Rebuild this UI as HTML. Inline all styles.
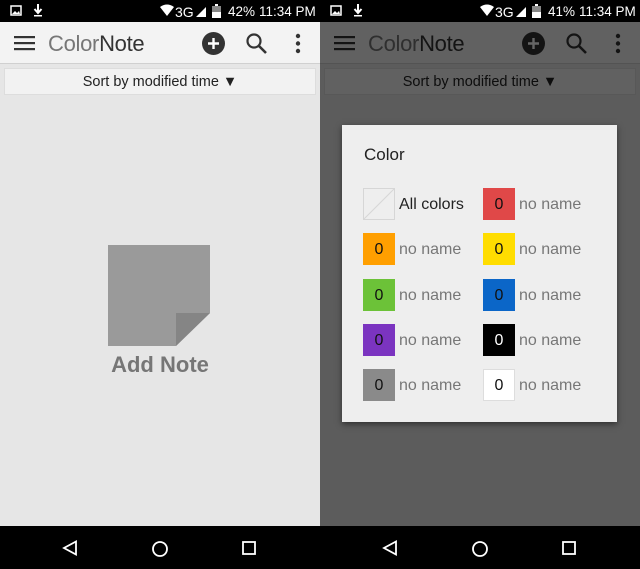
<!DOCTYPE html>
<html><head><style>
*{margin:0;padding:0;box-sizing:border-box}
body{width:640px;height:569px;background:#000;font-family:"Liberation Sans",sans-serif;position:relative;overflow:hidden}
.p{position:absolute;top:0;width:320px;height:569px;background:#e6e6e6;overflow:hidden}
.sb{position:absolute;top:0;left:0;width:320px;height:22px;background:#000;color:#fff;font-size:13.5px}
.tb{position:absolute;top:22px;left:0;width:320px;height:42px;background:#f3f3f3;border-bottom:1px solid #d0d0d0}
.sort{position:absolute;top:68px;left:4px;width:312px;height:27px;background:#f2f2f2;border:1px solid #ddd;font-size:14.5px;color:#222;text-align:center;line-height:26px}
.nav{position:absolute;top:526px;left:0;width:320px;height:43px;background:#000}
.ov{position:absolute;left:0;top:22px;width:320px;height:504px;background:rgba(0,0,0,0.6)}
.dlg{position:absolute;left:342px;top:125px;width:275px;height:297px;background:#eeeeee;box-shadow:0 2px 6px rgba(0,0,0,.5)}
.sw{position:absolute;width:32px;height:32px;font-size:16px;text-align:center;line-height:33px;color:#111}
.lb{position:absolute;font-size:16px;color:#777;line-height:33px}
</style></head><body>

<!-- LEFT -->
<div class="p" style="left:0">
 <div class="sb">
  <svg style="position:absolute;left:10px;top:5px" width="12" height="11"><rect x="1" y="1" width="10" height="9" fill="none" stroke="#fff" stroke-width="1.5"/><path d="M2 9 L5 6 L7 8 L9 6 L10 9Z" fill="#fff"/></svg>
  <svg style="position:absolute;left:33px;top:3px" width="10" height="14"><path d="M5 1V9M1.5 6L5 10L8.5 6" stroke="#fff" stroke-width="2" fill="none"/><rect x="1" y="12" width="8" height="1.5" fill="#fff"/></svg>
  <svg style="position:absolute;left:160px;top:4px" width="50" height="15"><path d="M0 3Q7 -2 14 3L7 12Z" fill="#fff"/><text x="15" y="13" fill="#fff" font-size="14" font-family="Liberation Sans">3G</text><path d="M36 13L46 3V13Z" fill="#fff"/></svg>
  <svg style="position:absolute;left:212px;top:4px" width="9" height="14"><rect x="3" y="0" width="3" height="2" fill="#fff"/><rect x="0" y="2" width="9" height="12" fill="#888"/><rect x="0" y="8" width="9" height="6" fill="#fff"/></svg>
  <span style="position:absolute;left:228px;top:4px">42%</span>
  <span style="position:absolute;left:259px;top:4px">11:34 PM</span>
 </div>
 <div class="tb">
  <svg style="position:absolute;left:14px;top:14px" width="22" height="15"><rect y="0" width="21" height="2.2" fill="#333"/><rect y="6" width="21" height="2.2" fill="#333"/><rect y="12" width="21" height="2.2" fill="#333"/></svg>
  <div style="position:absolute;left:48px;top:9px;font-size:22px;color:#777;letter-spacing:-0.3px">Color<span style="color:#333">Note</span></div>
  <svg style="position:absolute;left:202px;top:10px" width="23" height="23"><circle cx="11.5" cy="11.5" r="11.5" fill="#333"/><path d="M11.5 6V17M6 11.5H17" stroke="#fff" stroke-width="2.4"/></svg>
  <svg style="position:absolute;left:245px;top:10px" width="24" height="24"><circle cx="9" cy="9" r="6.5" fill="none" stroke="#333" stroke-width="2.2"/><path d="M14 14L21 21" stroke="#333" stroke-width="2.6"/></svg>
  <svg style="position:absolute;left:294px;top:11px" width="8" height="22"><circle cx="4" cy="3" r="2.2" fill="#333"/><circle cx="4" cy="10.5" r="2.2" fill="#333"/><circle cx="4" cy="18" r="2.2" fill="#333"/></svg>
 </div>
 <div class="sort">Sort by modified time &#9660;</div>
 <svg style="position:absolute;left:108px;top:245px" width="103" height="102"><path d="M0 0H102V68L68 101H0Z" fill="#9a9a9a"/><path d="M68 68H102L68 101Z" fill="#858585"/></svg>
 <div style="position:absolute;left:0;width:320px;top:352px;text-align:center;font-size:22px;font-weight:bold;color:#767676">Add Note</div>
 <div class="nav">
  <svg style="position:absolute;left:62px;top:14px" width="16" height="16"><path d="M14 1.5L2 8L14 14.5Z" fill="none" stroke="#fff" stroke-width="1.8"/></svg>
  <svg style="position:absolute;left:151px;top:14px" width="18" height="18"><circle cx="9" cy="9" r="7" fill="none" stroke="#fff" stroke-width="1.8"/></svg>
  <svg style="position:absolute;left:242px;top:15px" width="15" height="15"><rect x="1" y="1" width="12" height="12" fill="none" stroke="#fff" stroke-width="1.8"/></svg>
 </div>
</div>

<!-- RIGHT -->
<div class="p" style="left:320px">
 <div class="sb">
  <svg style="position:absolute;left:10px;top:5px" width="12" height="11"><rect x="1" y="1" width="10" height="9" fill="none" stroke="#fff" stroke-width="1.5"/><path d="M2 9 L5 6 L7 8 L9 6 L10 9Z" fill="#fff"/></svg>
  <svg style="position:absolute;left:33px;top:3px" width="10" height="14"><path d="M5 1V9M1.5 6L5 10L8.5 6" stroke="#fff" stroke-width="2" fill="none"/><rect x="1" y="12" width="8" height="1.5" fill="#fff"/></svg>
  <svg style="position:absolute;left:160px;top:4px" width="50" height="15"><path d="M0 3Q7 -2 14 3L7 12Z" fill="#fff"/><text x="15" y="13" fill="#fff" font-size="14" font-family="Liberation Sans">3G</text><path d="M36 13L46 3V13Z" fill="#fff"/></svg>
  <svg style="position:absolute;left:212px;top:4px" width="9" height="14"><rect x="3" y="0" width="3" height="2" fill="#fff"/><rect x="0" y="2" width="9" height="12" fill="#888"/><rect x="0" y="8" width="9" height="6" fill="#fff"/></svg>
  <span style="position:absolute;left:228px;top:4px">41%</span>
  <span style="position:absolute;left:259px;top:4px">11:34 PM</span>
 </div>
 <div class="tb">
  <svg style="position:absolute;left:14px;top:14px" width="22" height="15"><rect y="0" width="21" height="2.2" fill="#333"/><rect y="6" width="21" height="2.2" fill="#333"/><rect y="12" width="21" height="2.2" fill="#333"/></svg>
  <div style="position:absolute;left:48px;top:9px;font-size:22px;color:#777;letter-spacing:-0.3px">Color<span style="color:#333">Note</span></div>
  <svg style="position:absolute;left:202px;top:10px" width="23" height="23"><circle cx="11.5" cy="11.5" r="11.5" fill="#333"/><path d="M11.5 6V17M6 11.5H17" stroke="#fff" stroke-width="2.4"/></svg>
  <svg style="position:absolute;left:245px;top:10px" width="24" height="24"><circle cx="9" cy="9" r="6.5" fill="none" stroke="#333" stroke-width="2.2"/><path d="M14 14L21 21" stroke="#333" stroke-width="2.6"/></svg>
  <svg style="position:absolute;left:294px;top:11px" width="8" height="22"><circle cx="4" cy="3" r="2.2" fill="#333"/><circle cx="4" cy="10.5" r="2.2" fill="#333"/><circle cx="4" cy="18" r="2.2" fill="#333"/></svg>
 </div>
 <div class="sort">Sort by modified time &#9660;</div>
 <div class="ov"></div>
 <div class="nav">
  <svg style="position:absolute;left:62px;top:14px" width="16" height="16"><path d="M14 1.5L2 8L14 14.5Z" fill="none" stroke="#fff" stroke-width="1.8"/></svg>
  <svg style="position:absolute;left:151px;top:14px" width="18" height="18"><circle cx="9" cy="9" r="7" fill="none" stroke="#fff" stroke-width="1.8"/></svg>
  <svg style="position:absolute;left:242px;top:15px" width="15" height="15"><rect x="1" y="1" width="12" height="12" fill="none" stroke="#fff" stroke-width="1.8"/></svg>
 </div>
</div>

<div class="dlg">
 <div style="position:absolute;left:22px;top:20px;font-size:17px;color:#222">Color</div>
 <svg class="sw" style="left:21px;top:63px" width="32" height="32"><rect x="0.5" y="0.5" width="31" height="31" fill="#eee" stroke="#d6d6d6"/><path d="M1 31L31 1" stroke="#d6d6d6"/></svg>
 <div class="lb" style="left:57px;top:63px;color:#222">All colors</div>
 <div class="sw" style="left:141px;top:63px;background:#e04848">0</div><div class="lb" style="left:177px;top:63px">no name</div>
 <div class="sw" style="left:21px;top:108px;background:#ff9f00">0</div><div class="lb" style="left:57px;top:108px">no name</div>
 <div class="sw" style="left:141px;top:108px;background:#ffdd00">0</div><div class="lb" style="left:177px;top:108px">no name</div>
 <div class="sw" style="left:21px;top:154px;background:#6cc238">0</div><div class="lb" style="left:57px;top:154px">no name</div>
 <div class="sw" style="left:141px;top:154px;background:#0b66c8">0</div><div class="lb" style="left:177px;top:154px">no name</div>
 <div class="sw" style="left:21px;top:199px;background:#7b34c0">0</div><div class="lb" style="left:57px;top:199px">no name</div>
 <div class="sw" style="left:141px;top:199px;background:#000;color:#fff">0</div><div class="lb" style="left:177px;top:199px">no name</div>
 <div class="sw" style="left:21px;top:244px;background:#8a8a8a">0</div><div class="lb" style="left:57px;top:244px">no name</div>
 <div class="sw" style="left:141px;top:244px;background:#fff;border:1px solid #ddd;line-height:31px">0</div><div class="lb" style="left:177px;top:244px">no name</div>
</div>
</body></html>
